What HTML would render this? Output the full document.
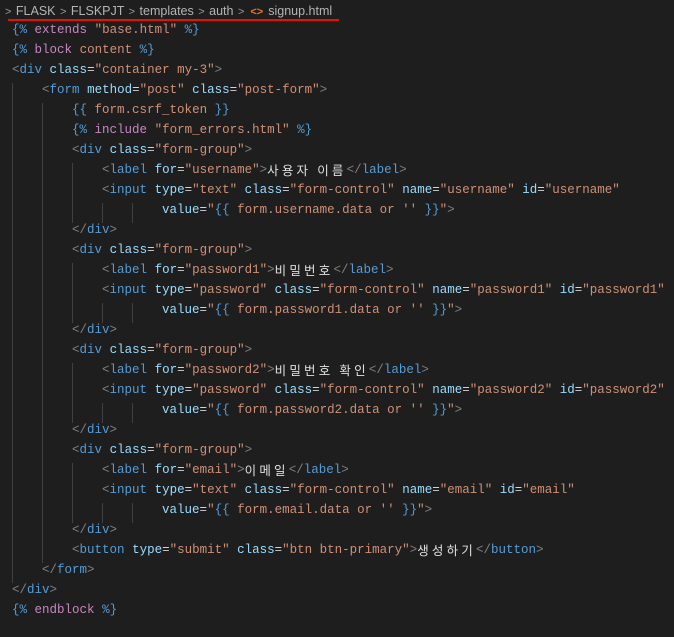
<!DOCTYPE html>
<html><head><meta charset="utf-8"><style>
html,body{margin:0;padding:0;background:#1e1e1e;width:674px;height:637px;overflow:hidden}
.bc{position:absolute;left:4px;top:2px;height:18px;font:12.5px "Liberation Sans","Noto Sans CJK KR",sans-serif;color:#b4b4b4;white-space:nowrap;line-height:18px}
.bc .s{color:#9a9a9a;margin:0 1px;font-size:11px}
.bc .ic{color:#e37933;font-weight:bold;margin:0 5px 0 5px;font-size:11px}
.red{position:absolute;left:8px;top:19px;width:331px;height:2px;background:#e51400}
.code{position:absolute;left:0;top:23px;width:674px}
.l{position:relative;height:20px;line-height:20px;padding-left:12px;white-space:pre;font:12.5px "Liberation Mono",monospace;color:#d4d4d4}
.l::before{content:"";position:absolute;left:12px;top:0;bottom:0;width:calc(var(--i,0)*30px);background:repeating-linear-gradient(to right,#404040 0 1px,transparent 1px 30px)}
.b{color:#569cd6}.k{color:#c586c0}.o{color:#ce9178}.p{color:#808080}.a{color:#9cdcfe}.w{color:#d4d4d4}
.h{display:inline-block;vertical-align:top;position:relative;top:-3px;height:20px;line-height:20px;letter-spacing:3.2px;font-family:"Noto Sans CJK KR",sans-serif;font-size:12.5px;color:#e0e0e0}
</style></head><body>
<div class="bc"><span class="s">&gt;</span> FLASK <span class="s">&gt;</span> FLSKPJT <span class="s">&gt;</span> templates <span class="s">&gt;</span> auth <span class="s">&gt;</span><span class="ic">&lt;&gt;</span>signup.html</div>
<div class="red"></div>
<div class="code">
<div class="l"><span class="b">{%</span> <span class="k">extends</span> <span class="o">"base.html"</span> <span class="b">%}</span></div>
<div class="l"><span class="b">{%</span> <span class="k">block</span> <span class="o">content</span> <span class="b">%}</span></div>
<div class="l"><span class="p">&lt;</span><span class="b">div</span> <span class="a">class</span>=<span class="o">"container my-3"</span><span class="p">&gt;</span></div>
<div class="l" style="--i:1">    <span class="p">&lt;</span><span class="b">form</span> <span class="a">method</span>=<span class="o">"post"</span> <span class="a">class</span>=<span class="o">"post-form"</span><span class="p">&gt;</span></div>
<div class="l" style="--i:2">        <span class="b">{{</span> <span class="o">form.csrf_token</span> <span class="b">}}</span></div>
<div class="l" style="--i:2">        <span class="b">{%</span> <span class="k">include</span> <span class="o">"form_errors.html"</span> <span class="b">%}</span></div>
<div class="l" style="--i:2">        <span class="p">&lt;</span><span class="b">div</span> <span class="a">class</span>=<span class="o">"form-group"</span><span class="p">&gt;</span></div>
<div class="l" style="--i:3">            <span class="p">&lt;</span><span class="b">label</span> <span class="a">for</span>=<span class="o">"username"</span><span class="p">&gt;</span><span class="h">사용자 이름</span><span class="p">&lt;/</span><span class="b">label</span><span class="p">&gt;</span></div>
<div class="l" style="--i:3">            <span class="p">&lt;</span><span class="b">input</span> <span class="a">type</span>=<span class="o">"text"</span> <span class="a">class</span>=<span class="o">"form-control"</span> <span class="a">name</span>=<span class="o">"username"</span> <span class="a">id</span>=<span class="o">"username"</span></div>
<div class="l" style="--i:5">                    <span class="a">value</span>=<span class="o">"</span><span class="b">{{</span><span class="o"> form.username.data or '' </span><span class="b">}}</span><span class="o">"</span><span class="p">&gt;</span></div>
<div class="l" style="--i:2">        <span class="p">&lt;/</span><span class="b">div</span><span class="p">&gt;</span></div>
<div class="l" style="--i:2">        <span class="p">&lt;</span><span class="b">div</span> <span class="a">class</span>=<span class="o">"form-group"</span><span class="p">&gt;</span></div>
<div class="l" style="--i:3">            <span class="p">&lt;</span><span class="b">label</span> <span class="a">for</span>=<span class="o">"password1"</span><span class="p">&gt;</span><span class="h">비밀번호</span><span class="p">&lt;/</span><span class="b">label</span><span class="p">&gt;</span></div>
<div class="l" style="--i:3">            <span class="p">&lt;</span><span class="b">input</span> <span class="a">type</span>=<span class="o">"password"</span> <span class="a">class</span>=<span class="o">"form-control"</span> <span class="a">name</span>=<span class="o">"password1"</span> <span class="a">id</span>=<span class="o">"password1"</span></div>
<div class="l" style="--i:5">                    <span class="a">value</span>=<span class="o">"</span><span class="b">{{</span><span class="o"> form.password1.data or '' </span><span class="b">}}</span><span class="o">"</span><span class="p">&gt;</span></div>
<div class="l" style="--i:2">        <span class="p">&lt;/</span><span class="b">div</span><span class="p">&gt;</span></div>
<div class="l" style="--i:2">        <span class="p">&lt;</span><span class="b">div</span> <span class="a">class</span>=<span class="o">"form-group"</span><span class="p">&gt;</span></div>
<div class="l" style="--i:3">            <span class="p">&lt;</span><span class="b">label</span> <span class="a">for</span>=<span class="o">"password2"</span><span class="p">&gt;</span><span class="h">비밀번호 확인</span><span class="p">&lt;/</span><span class="b">label</span><span class="p">&gt;</span></div>
<div class="l" style="--i:3">            <span class="p">&lt;</span><span class="b">input</span> <span class="a">type</span>=<span class="o">"password"</span> <span class="a">class</span>=<span class="o">"form-control"</span> <span class="a">name</span>=<span class="o">"password2"</span> <span class="a">id</span>=<span class="o">"password2"</span></div>
<div class="l" style="--i:5">                    <span class="a">value</span>=<span class="o">"</span><span class="b">{{</span><span class="o"> form.password2.data or '' </span><span class="b">}}</span><span class="o">"</span><span class="p">&gt;</span></div>
<div class="l" style="--i:2">        <span class="p">&lt;/</span><span class="b">div</span><span class="p">&gt;</span></div>
<div class="l" style="--i:2">        <span class="p">&lt;</span><span class="b">div</span> <span class="a">class</span>=<span class="o">"form-group"</span><span class="p">&gt;</span></div>
<div class="l" style="--i:3">            <span class="p">&lt;</span><span class="b">label</span> <span class="a">for</span>=<span class="o">"email"</span><span class="p">&gt;</span><span class="h">이메일</span><span class="p">&lt;/</span><span class="b">label</span><span class="p">&gt;</span></div>
<div class="l" style="--i:3">            <span class="p">&lt;</span><span class="b">input</span> <span class="a">type</span>=<span class="o">"text"</span> <span class="a">class</span>=<span class="o">"form-control"</span> <span class="a">name</span>=<span class="o">"email"</span> <span class="a">id</span>=<span class="o">"email"</span></div>
<div class="l" style="--i:5">                    <span class="a">value</span>=<span class="o">"</span><span class="b">{{</span><span class="o"> form.email.data or '' </span><span class="b">}}</span><span class="o">"</span><span class="p">&gt;</span></div>
<div class="l" style="--i:2">        <span class="p">&lt;/</span><span class="b">div</span><span class="p">&gt;</span></div>
<div class="l" style="--i:2">        <span class="p">&lt;</span><span class="b">button</span> <span class="a">type</span>=<span class="o">"submit"</span> <span class="a">class</span>=<span class="o">"btn btn-primary"</span><span class="p">&gt;</span><span class="h">생성하기</span><span class="p">&lt;/</span><span class="b">button</span><span class="p">&gt;</span></div>
<div class="l" style="--i:1">    <span class="p">&lt;/</span><span class="b">form</span><span class="p">&gt;</span></div>
<div class="l"><span class="p">&lt;/</span><span class="b">div</span><span class="p">&gt;</span></div>
<div class="l"><span class="b">{%</span> <span class="k">endblock</span> <span class="b">%}</span></div>
</div>
</body></html>
